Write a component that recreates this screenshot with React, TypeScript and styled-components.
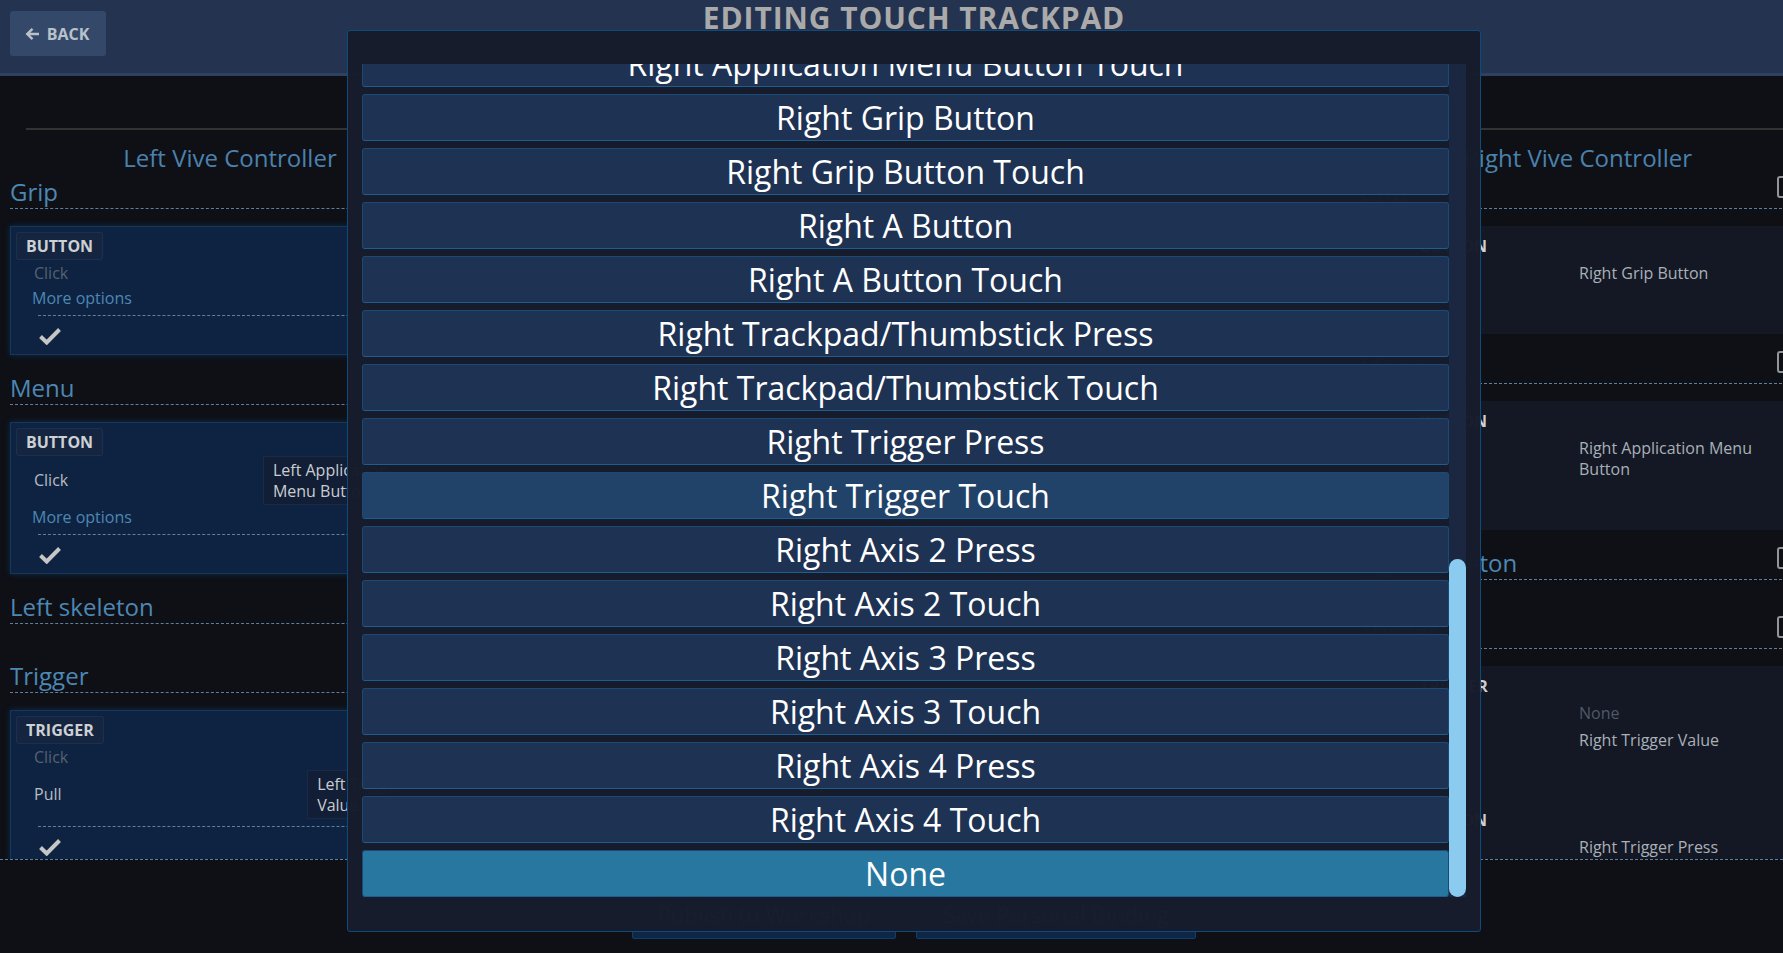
import React from "react";
import styled, { createGlobalStyle } from "styled-components";

const GlobalStyle = createGlobalStyle`
  html, body {
    margin: 0;
    padding: 0;
    background: #0e1016;
    overflow: hidden;
  }
  body {
    font-family: "Open Sans", "Noto Sans", "Liberation Sans", sans-serif;
  }
  * { box-sizing: border-box; }
`;

const Page = styled.div`
  position: relative;
  width: 1828px;
  height: 953px;
  background: #0e1016;
  display: flex;
  flex-direction: column;
  overflow: hidden;
`;

const Header = styled.header`
  height: 76px;
  flex-shrink: 0;
  background: #243350;
  border-bottom: 3px solid #2e4161;
  display: grid;
  grid-template-columns: 1fr auto 1fr;
  align-items: start;
`;

const BackButton = styled.button`
  justify-self: start;
  margin: 11px 0 0 10px;
  width: 96px;
  height: 45px;
  padding: 0 2px 0 0;
  background: #34496a;
  border: none;
  border-radius: 3px;
  color: #b9c1ca;
  font: 700 16px "Open Sans", sans-serif;
  display: flex;
  align-items: center;
  justify-content: center;
  gap: 7px;
`;

const Title = styled.h1`
  margin: 0;
  font: 700 30px/36px "Open Sans", sans-serif;
  color: #aaaaaa;
  letter-spacing: 0.9px;
  white-space: nowrap;
`;

const Main = styled.main`
  height: 784px;
  flex-shrink: 0;
  overflow: hidden;
  padding-top: 52px;
  border-bottom: 1px dashed #5e7f9e;
`;

const Rule = styled.div`
  margin-left: 26px;
  border-top: 2px solid #343333;
`;

const Columns = styled.div`
  display: grid;
  grid-template-columns: 440px 1fr 438px;
  padding: 0 31px 0 10px;
`;

const Column = styled.section`
  display: flex;
  flex-direction: column;
`;

const ControllerName = styled.h2`
  margin: 12px 0 2px;
  font: 400 24px/32px "Open Sans", sans-serif;
  color: #4b82ad;
  text-align: center;
`;

const SectionHead = styled.div`
  display: flex;
  justify-content: space-between;
  align-items: flex-start;
  border-bottom: 1px dashed #5e7f9e;
`;

const SectionTitle = styled.h3`
  margin: 0;
  font: 400 24px/32px "Open Sans", sans-serif;
  color: #4d87b4;
`;

const EditIcon = styled.span`
  width: 20px;
  height: 22px;
  border: 2px solid #8f959b;
  border-radius: 3px;
  display: flex;
  align-items: center;
  justify-content: center;
  color: #8f959b;
  font: 700 14px/1 "Open Sans", sans-serif;
`;

const Empty = styled.div`
  height: 36px;
`;

const Card = styled.div<{ $tone: "blue" | "dark" }>`
  margin: 17px 0;
  padding: 5px 5px ${(p) => (p.$tone === "blue" ? "0" : "46px")};
  background: ${(p) => (p.$tone === "blue" ? "#0e2341" : "#141824")};
  border: 1px solid ${(p) => (p.$tone === "blue" ? "#13375e" : "#141824")};
  box-shadow: ${(p) =>
    p.$tone === "blue" ? "0 0 6px rgba(24, 96, 170, 0.35)" : "none"};
`;

const Tag = styled.div<{ $indent?: number; $gap?: number; $plain?: boolean }>`
  align-self: flex-start;
  display: inline-block;
  height: 28px;
  margin-left: ${(p) => p.$indent ?? 0}px;
  margin-top: ${(p) => p.$gap ?? 0}px;
  padding: 0 9px;
  background: ${(p) => (p.$plain ? "transparent" : "#15253f")};
  border: 1px solid ${(p) => (p.$plain ? "transparent" : "#1a3050")};
  border-radius: 2px;
  font: 700 16px/26px "Open Sans", sans-serif;
  color: #cdd0d4;
`;

const Row = styled.div`
  display: flex;
  align-items: center;
  min-height: 26px;
  padding-left: 18px;
`;

const Label = styled.span<{ $dim?: boolean }>`
  font: 400 16px/21px "Open Sans", sans-serif;
  color: ${(p) => (p.$dim ? "#566170" : "#b7bcc2")};
`;

const ValueBox = styled.div<{ $right: number }>`
  margin-left: auto;
  margin-right: ${(p) => p.$right}px;
  padding: 3px 9px 2px;
  background: #121e35;
  border: 1px solid #182a45;
  font: 400 16px/21px "Open Sans", sans-serif;
  color: #c9cdd1;
  white-space: nowrap;
`;

const MoreOptions = styled.div`
  height: 24px;
  padding-left: 16px;
  font: 400 16px/24px "Open Sans", sans-serif;
  color: #4d87b4;
`;

const Divider = styled.div<{ $gap: number }>`
  margin: ${(p) => p.$gap}px 0 0 22px;
  border-top: 1px dashed #5e7f9e;
`;

const CheckRow = styled.div`
  height: 38px;
  padding: 11px 0 0 22px;
`;

const BoundValue = styled.div<{ $dim?: boolean }>`
  padding: 3px 0 3px 214px;
  font: 400 16px/21px "Open Sans", sans-serif;
  color: ${(p) => (p.$dim ? "#4f5866" : "#a9b0b8")};
`;

const CardBody = styled.div`
  display: flex;
  flex-direction: column;
`;

const Footer = styled.footer`
  flex: 1;
  display: flex;
  justify-content: center;
  gap: 20px;
  padding-top: 28px;
`;

const FooterButton = styled.button<{ $width: number }>`
  width: ${(p) => p.$width}px;
  height: 51px;
  background: #0f2746;
  border: 1px solid #0f3f69;
  border-radius: 2px;
  color: #8d939b;
  font: 400 22px "Open Sans", sans-serif;
`;

/* ---------- picker modal ---------- */

const Modal = styled.div`
  position: absolute;
  top: 30px;
  left: 347px;
  width: 1134px;
  height: 902px;
  padding: 33px 14px 34px;
  background: rgba(22, 28, 44, 0.99);
  border: 1px solid #0e4b7d;
  border-radius: 3px;
  display: flex;
`;

const OptionList = styled.div`
  flex: 1;
  display: flex;
  flex-direction: column;
  justify-content: flex-end;
  gap: 7px;
  overflow: hidden;
`;

const Option = styled.div<{ $state?: "hover" | "selected" }>`
  flex-shrink: 0;
  height: 47px;
  border: 1px solid #1b4a76;
  border-bottom-color: #1d5d90;
  border-radius: 3px;
  background: ${(p) =>
    p.$state === "selected"
      ? "#2877a0"
      : p.$state === "hover"
      ? "rgba(35, 68, 106, 0.98)"
      : "rgba(31, 51, 84, 0.98)"};
  color: #ffffff;
  font: 400 32px/45px "Open Sans", sans-serif;
  text-align: center;
  white-space: nowrap;
`;

const ScrollTrack = styled.div`
  width: 17px;
  background: #1b2740;
  display: flex;
  flex-direction: column;
  justify-content: flex-end;
`;

const ScrollThumb = styled.div`
  height: 338px;
  border-radius: 9px;
  background: #8ccbf0;
`;

const BackArrow = () => (
  <svg width="15" height="14" viewBox="0 0 15 14" fill="none">
    <path d="M14 7H2.5M7.5 1.8L2.2 7l5.3 5.2" stroke="#b9c1ca" strokeWidth="2.4" />
  </svg>
);

const Check = () => (
  <svg width="24" height="18" viewBox="0 0 24 18" fill="none">
    <path d="M2.5 9.5l6.2 6L21.5 2.5" stroke="#c6c6c6" strokeWidth="4" />
  </svg>
);

const options = [
  "Left Axis 4 Press",
  "Left Axis 4 Touch",
  "Right System Button",
  "Right System Button Touch",
  "Right Application Menu Button",
  "Right Application Menu Button Touch",
  "Right Grip Button",
  "Right Grip Button Touch",
  "Right A Button",
  "Right A Button Touch",
  "Right Trackpad/Thumbstick Press",
  "Right Trackpad/Thumbstick Touch",
  "Right Trigger Press",
  "Right Trigger Touch",
  "Right Axis 2 Press",
  "Right Axis 2 Touch",
  "Right Axis 3 Press",
  "Right Axis 3 Touch",
  "Right Axis 4 Press",
  "Right Axis 4 Touch",
  "None",
];

const optionState = (name: string) =>
  name === "None" ? "selected" : name === "Right Trigger Touch" ? "hover" : undefined;

export default function App() {
  return (
    <Page>
      <GlobalStyle />
      <Header>
        <BackButton>
          <BackArrow />
          BACK
        </BackButton>
        <Title>EDITING TOUCH TRACKPAD</Title>
      </Header>

      <Main>
        <Rule />
        <Columns>
          <Column>
            <ControllerName>Left Vive Controller</ControllerName>

            <SectionHead>
              <SectionTitle>Grip</SectionTitle>
            </SectionHead>
            <Card $tone="blue">
              <CardBody>
                <Tag>BUTTON</Tag>
                <Row>
                  <Label $dim>Click</Label>
                </Row>
                <MoreOptions>More options</MoreOptions>
                <Divider $gap={5} />
                <CheckRow>
                  <Check />
                </CheckRow>
              </CardBody>
            </Card>

            <SectionHead>
              <SectionTitle>Menu</SectionTitle>
            </SectionHead>
            <Card $tone="blue">
              <CardBody>
                <Tag>BUTTON</Tag>
                <Row>
                  <Label>Click</Label>
                  <ValueBox $right={45}>
                    Left Application
                    <br />
                    Menu Button
                  </ValueBox>
                </Row>
                <MoreOptions>More options</MoreOptions>
                <Divider $gap={5} />
                <CheckRow>
                  <Check />
                </CheckRow>
              </CardBody>
            </Card>

            <SectionHead>
              <SectionTitle>Left skeleton</SectionTitle>
            </SectionHead>
            <Empty />

            <SectionHead>
              <SectionTitle>Trigger</SectionTitle>
            </SectionHead>
            <Card $tone="blue">
              <CardBody>
                <Tag>TRIGGER</Tag>
                <Row>
                  <Label $dim>Click</Label>
                </Row>
                <Row>
                  <Label>Pull</Label>
                  <ValueBox $right={32}>
                    Left Trigger
                    <br />
                    Value
                  </ValueBox>
                </Row>
                <Divider $gap={7} />
                <CheckRow>
                  <Check />
                </CheckRow>
              </CardBody>
            </Card>
          </Column>

          <div />

          <Column>
            <ControllerName>Right Vive Controller</ControllerName>

            <SectionHead>
              <SectionTitle>Grip</SectionTitle>
              <EditIcon>+</EditIcon>
            </SectionHead>
            <Card $tone="dark">
              <CardBody>
                <Tag $plain $indent={45}>BUTTON</Tag>
                <BoundValue>Right Grip Button</BoundValue>
              </CardBody>
            </Card>

            <SectionHead>
              <SectionTitle>Menu</SectionTitle>
              <EditIcon>+</EditIcon>
            </SectionHead>
            <Card $tone="dark">
              <CardBody>
                <Tag $plain $indent={45}>BUTTON</Tag>
                <BoundValue>
                  Right Application Menu
                  <br />
                  Button
                </BoundValue>
              </CardBody>
            </Card>

            <SectionHead>
              <SectionTitle>Right skeleton</SectionTitle>
              <EditIcon>+</EditIcon>
            </SectionHead>
            <Empty />

            <SectionHead>
              <SectionTitle>Trigger</SectionTitle>
              <EditIcon>+</EditIcon>
            </SectionHead>
            <Card $tone="dark">
              <CardBody>
                <Tag $plain $indent={45}>TRIGGER</Tag>
                <BoundValue $dim>None</BoundValue>
                <BoundValue>Right Trigger Value</BoundValue>
                <Tag $plain $indent={45} $gap={52}>
                  BUTTON
                </Tag>
                <BoundValue>Right Trigger Press</BoundValue>
              </CardBody>
            </Card>
          </Column>
        </Columns>
      </Main>

      <Footer>
        <FooterButton $width={264}>Publish to Workshop</FooterButton>
        <FooterButton $width={280}>Save Personal Binding</FooterButton>
      </Footer>

      <Modal>
        <OptionList>
          {options.map((name) => (
            <Option key={name} $state={optionState(name)}>
              {name}
            </Option>
          ))}
        </OptionList>
        <ScrollTrack>
          <ScrollThumb />
        </ScrollTrack>
      </Modal>
    </Page>
  );
}
